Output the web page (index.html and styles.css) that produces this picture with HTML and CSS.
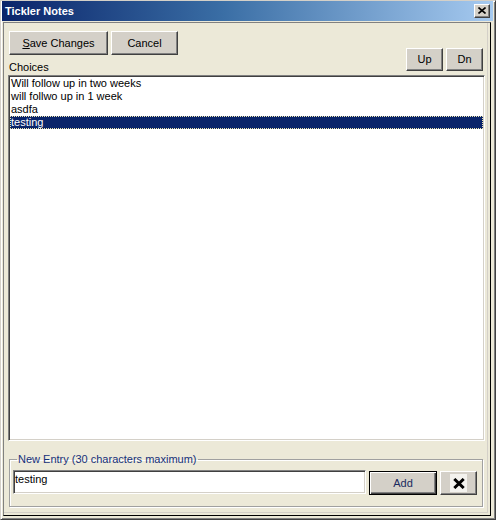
FILE: index.html
```html
<!DOCTYPE html>
<html>
<head>
<meta charset="utf-8">
<title>Tickler Notes</title>
<link rel="stylesheet" href="styles.css">
</head>
<body>
<div class="window">
  <div class="titlebar">
    <span class="title">Tickler Notes</span>
    <span class="close-btn">
      <svg width="8" height="7" viewBox="0 0 8 7"><path d="M0.5 0.5 L7.5 6.5 M7.5 0.5 L0.5 6.5" stroke="#000" stroke-width="1.6" fill="none"/></svg>
    </span>
  </div>
  <div class="client">
    <div class="header">
      <div class="header-left">
        <div class="btn-row">
          <div class="btn btn-save"><u>S</u>ave Changes</div>
          <div class="btn btn-cancel">Cancel</div>
        </div>
        <div class="label">Choices</div>
      </div>
      <div class="header-right">
        <div class="btn btn-small">Up</div>
        <div class="btn btn-small">Dn</div>
      </div>
    </div>
    <div class="listbox">
      <div class="item">Will follow up in two weeks</div>
      <div class="item">will follwo up in 1 week</div>
      <div class="item">asdfa</div>
      <div class="item selected">testing</div>
    </div>
    <fieldset class="group">
      <legend class="legend">New Entry (30 characters maximum)</legend>
      <div class="entry-row">
        <div class="textbox">testing</div>
        <div class="btn btn-default">Add</div>
        <div class="btn btn-x">
          <span class="x-square">
            <svg width="12" height="11" viewBox="0 0 12 11"><path d="M1.3 1 L10.7 10 M10.7 1 L1.3 10" stroke="#000" stroke-width="3" fill="none"/></svg>
          </span>
        </div>
      </div>
    </fieldset>
  </div>
</div>
</body>
</html>
```
FILE: styles.css
```css
html, body {
  margin: 0;
  padding: 0;
  background: #ffffff;
}

body {
  font-family: "Liberation Sans", Arial, sans-serif;
  font-size: 11px;
  line-height: 13px;
  color: #000;
}

.window {
  width: 496px;
  height: 520px;
  box-sizing: border-box;
  background: #ece9d8;
  border-style: solid;
  border-width: 1px;
  border-color: #d4d0c8 #404040 #404040 #d4d0c8;
  box-shadow: inset 1px 1px 0 #ffffff, inset -1px -1px 0 #808080;
  padding: 0 2px 2px 1px;
  display: flex;
  flex-direction: column;
}

.titlebar {
  height: 20px;
  flex: none;
  background: linear-gradient(to right, #0a246a 0%, #3a6ea5 45%, #a6caf0 100%);
  display: flex;
  align-items: center;
  justify-content: space-between;
  padding: 0 3px 0 3px;
}

.title {
  color: #fff;
  font-weight: bold;
  font-size: 11px;
}

.close-btn {
  width: 16px;
  height: 14px;
  box-sizing: border-box;
  background: #d4d0c8;
  border-style: solid;
  border-width: 1px;
  border-color: #ffffff #404040 #404040 #ffffff;
  box-shadow: inset -1px -1px 0 #808080;
  display: flex;
  align-items: center;
  justify-content: center;
}

.close-btn svg {
  display: block;
  margin: 0 1px 1px 0;
}

.client {
  flex: 1;
  margin: 1px 2px 1px 1px;
  border-style: solid;
  border-width: 1px;
  border-color: #808080 #000000 #000000 #808080;
  box-shadow: inset -2px -2px 0 #ece9d8, inset -3px -3px 0 #d4d0c8;
  padding: 8px 5px 7px 4px;
  display: flex;
  flex-direction: column;
  min-height: 0;
}

.header {
  display: flex;
  justify-content: space-between;
  align-items: flex-end;
  flex: none;
}

.header-left {
  margin-left: 1px;
}

.btn-row {
  display: flex;
  gap: 3px;
}

.label {
  margin-top: 6px;
  height: 13px;
}

.header-right {
  display: flex;
  gap: 3px;
  margin-right: 2px;
  margin-bottom: 3px;
}

.btn {
  box-sizing: border-box;
  background: #d4d0c8;
  border-style: solid;
  border-width: 1px;
  border-color: #ffffff #404040 #404040 #ffffff;
  box-shadow: inset -1px -1px 0 #808080;
  display: flex;
  align-items: center;
  justify-content: center;
  color: #000;
  white-space: nowrap;
}

.btn-save {
  width: 99px;
  height: 24px;
}

.btn-cancel {
  width: 67px;
  height: 24px;
}

.btn-small {
  width: 37px;
  height: 23px;
}

.listbox {
  flex: 1;
  margin-top: 1px;
  background: #fff;
  border-style: solid;
  border-width: 1px;
  border-color: #808080 #ffffff #ffffff #808080;
  box-shadow: inset 1px 1px 0 #404040, inset -1px -1px 0 #d4d0c8;
  padding: 1px;
  min-height: 0;
}

.item {
  height: 13px;
  padding-left: 1px;
  white-space: nowrap;
}

.item.selected {
  background: #0a246a;
  color: #fff;
  outline: 1px dotted #f0e8b0;
  outline-offset: -1px;
}

.group {
  flex: none;
  margin: 12px 2px 1px 1px;
  padding: 4px 5px 11px 3px;
  border: 1px solid #a0a0a0;
  box-shadow: inset 1px 1px 0 #ffffff, 1px 1px 0 #ffffff;
  min-width: 0;
}

.legend {
  margin-left: 4px;
  padding: 0 1px;
  color: #15307a;
  line-height: 13px;
}

.entry-row {
  display: flex;
  align-items: flex-start;
  gap: 3px;
}

.textbox {
  width: 353px;
  height: 24px;
  box-sizing: border-box;
  background: #fff;
  border-style: solid;
  border-width: 1px;
  border-color: #808080 #ffffff #ffffff #808080;
  box-shadow: inset 1px 1px 0 #404040, inset -1px -1px 0 #d4d0c8;
  padding: 2px 0 0 1px;
  white-space: nowrap;
}

.btn-default {
  width: 68px;
  height: 24px;
  margin-top: 1px;
  border: 1px solid #000;
  box-shadow: inset 1px 1px 0 #ffffff, inset -1px -1px 0 #404040, inset -2px -2px 0 #808080;
  color: #1a2a60;
}

.btn-x {
  width: 37px;
  height: 24px;
  margin-top: 1px;
}

.x-square {
  width: 17px;
  height: 18px;
  background: #f3f2ee;
  display: flex;
  align-items: center;
  justify-content: center;
}

.x-square svg {
  display: block;
}
```
